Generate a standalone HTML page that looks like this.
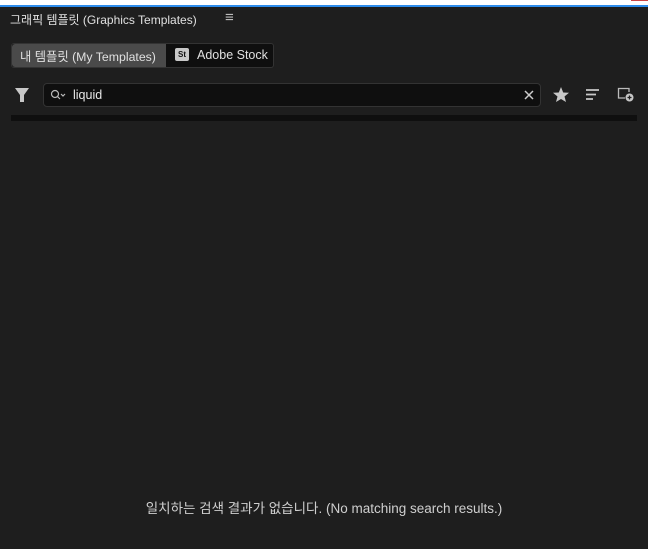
<!DOCTYPE html><html><head><style>
body{margin:0;width:648px;height:549px;background:#1e1e1e;overflow:hidden;font-family:"Liberation Sans","Noto Sans CJK KR",sans-serif;position:relative;color:#d8d8d8}
.a{position:absolute}
</style></head><body>
<div class="a" style="left:0;top:0;width:648px;height:5px;background:#fff"></div>
<div class="a" style="top:0;width:17px;height:1px;background:#c44;left:631px"></div>
<div class="a" style="left:0;top:5px;width:648px;height:2px;background:#2d8ceb"></div>
<div class="a" style="left:10px;top:11px;font-size:12px;color:#e0e0e0;white-space:nowrap">그래픽 템플릿 (Graphics Templates)</div>
<div class="a" style="left:225px;top:9px;font-size:15px;color:#bbb">≡</div>
<div class="a" style="left:11px;top:43px;width:261px;height:23px;border:1px solid #333;border-radius:3px;background:#0f0f0f"></div>
<div class="a" style="left:12px;top:44px;width:154px;height:23px;background:#4a4a4a;border-radius:3px 0 0 3px"></div>
<div class="a" style="left:20px;top:47px;font-size:12.3px;color:#e0e0e0;white-space:nowrap">내 템플릿 (My Templates)</div>
<div class="a" style="left:175px;top:48px;width:14px;height:13px;background:#c8c8c8;border-radius:2px;color:#111;font-size:8px;font-weight:bold;text-align:center;line-height:13px">St</div>
<div class="a" style="left:197px;top:48px;font-size:12.5px;color:#e0e0e0">Adobe Stock</div>
<svg class="a" style="left:14px;top:87px" width="16" height="16"><path d="M1 1H15L10 8V15H6V8Z" fill="#c8c8c8"/></svg>
<div class="a" style="left:43px;top:83px;width:496px;height:22px;border:1px solid #333;border-radius:4px;background:#0f0f0f"></div>
<svg class="a" style="left:50px;top:89px" width="18" height="12"><circle cx="5" cy="5" r="3.5" stroke="#bbb" fill="none" stroke-width="1.2"/><path d="M7.5 7.5L10 10M11 5L13 7L15 5" stroke="#bbb" fill="none" stroke-width="1.2"/></svg>
<div class="a" style="left:73px;top:88px;font-size:12.5px;color:#e8e8e8">liquid</div>
<svg class="a" style="left:524px;top:90px" width="10" height="10"><path d="M1 1L9 9M9 1L1 9" stroke="#ccc" stroke-width="1.5"/></svg>
<svg class="a" style="left:552px;top:86px" width="18" height="18"><path d="M9 1L11.2 6.5L17 6.8L12.5 10.5L14 16L9 13L4 16L5.5 10.5L1 6.8L6.8 6.5Z" fill="#c8c8c8"/></svg>
<svg class="a" style="left:586px;top:88px" width="14" height="14"><path d="M0 2H13M0 6.5H10M0 11H7" stroke="#c8c8c8" stroke-width="1.8"/></svg>
<svg class="a" style="left:617px;top:87px" width="18" height="16"><path d="M8 11H1.5V1.5H12V5" stroke="#bbb" fill="none" stroke-width="1.3"/><circle cx="12.5" cy="10.5" r="4" fill="#c8c8c8"/><path d="M12.5 8.5V12.5M10.5 10.5H14.5" stroke="#1e1e1e" stroke-width="1.3"/></svg>
<div class="a" style="left:11px;top:115px;width:626px;height:6px;background:#0f0f0f"></div>
<div class="a" style="left:0;top:497px;width:648px;text-align:center;font-size:13.5px;color:#cfcfcf">일치하는 검색 결과가 없습니다. (No matching search results.)</div>
</body></html>
